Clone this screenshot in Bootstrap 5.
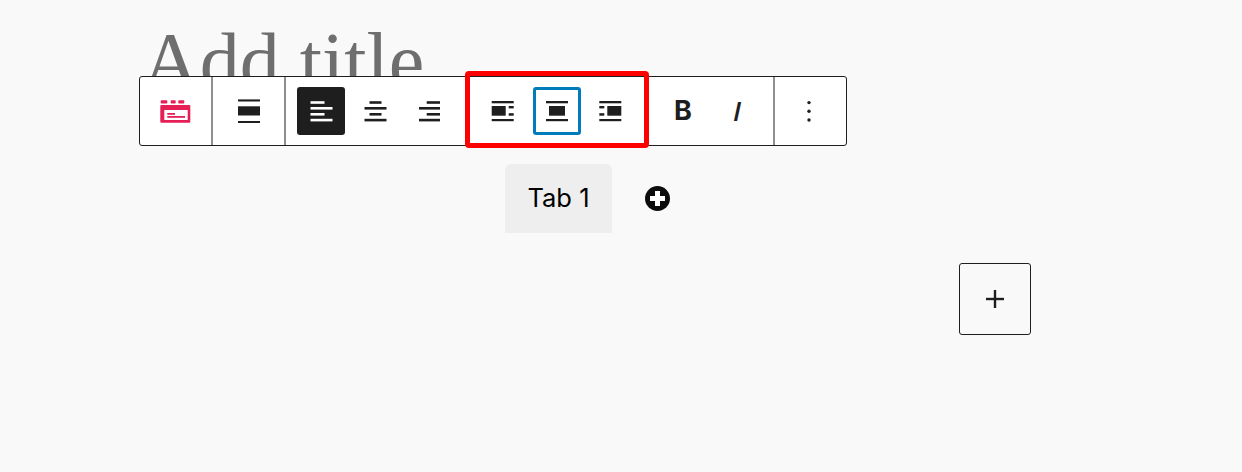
<!DOCTYPE html>
<html lang="en">
<head>
  <meta charset="UTF-8" />
  <title>Add title</title>
  <link href="https://cdn.jsdelivr.net/npm/bootstrap@5.3.0/dist/css/bootstrap.min.css" rel="stylesheet">
  <style>
    body { background: #f9f9f9; height: 472px; overflow: hidden; font-family: Inter, sans-serif; }
    .editor-wrap { height: 164px; padding-left: 142px; }
    .post-title { font-family: "Liberation Serif", serif; font-size: 80px; line-height: 90px; color: #6e6e6e; font-weight: 400; padding-top: 16px; margin: 0; }
    .block-toolbar { left: 139px; top: 76px; width: 708px; height: 70px; background: #fff; border: 1px solid #1e1e1e; border-radius: 3px; }
    .tool-group { padding: 10px 12px; gap: 6px; }
    .tool-group.sep { border-left: 2px solid #8f8f8f; }
    .grp-first { padding-left: 11px; }
    .grp-mid { padding-right: 11px; }
    .grp-align { padding-left: 11px; }
    .grp-wide { padding-left: 14px; padding-right: 12px; }
    .grp-text { padding-right: 12px; }
    .grp-more { padding-left: 10px; }
    .tool-btn { width: 48px; height: 48px; border: 0; padding: 0; background: transparent; color: #1e1e1e; border-radius: 3px; }
    .tool-btn.on { background: #1e1e1e; color: #fff; }
    .tool-btn.picked { box-shadow: inset 0 0 0 3px #007cba; }
    .tool-btn svg { display: block; margin: auto; }
    .tool-txt { font-size: 27px; line-height: 48px; font-weight: 700; }
    .tool-txt.slant { font-family: "Open Sans", sans-serif; font-style: italic; font-weight: 600; font-size: 27px; }
    .red-box { left: 325px; top: -6px; width: 184px; height: 77px; border: 5px solid #f00; border-radius: 4px; }
    .tab-item { margin-left: 505px; width: 107px; height: 69px; background: #eee; border-radius: 6px 6px 0 0; font-size: 25.5px; color: #000; }
    .tab-add { margin-left: 33px; }
    .add-row { margin-top: 30px; padding-right: 211px; }
    .block-add { width: 72px; height: 72px; background: transparent; border: 1px solid #1e1e1e; border-radius: 3px; padding: 0; }
  </style>
</head>
<body>
  <div class="editor-wrap">
    <h1 class="post-title">Add title</h1>
  </div>

  <!-- toolbar over the title -->
  <div class="block-toolbar position-absolute d-flex">
    <div class="tool-group grp-first d-flex">
      <button class="tool-btn">
        <svg width="36" height="36" viewBox="0 0 36 36" fill="#e51f55"><rect x="3.7" y="7.2" width="6.6" height="3.4" rx=".8"/><rect x="13.7" y="7.2" width="5" height="3.4" rx=".8"/><rect x="21.3" y="7.2" width="6" height="3.4" rx=".8"/><path fill-rule="evenodd" d="M4.3 12h28a1 1 0 0 1 1 1v15.7a1 1 0 0 1-1 1h-28a1 1 0 0 1-1-1V13a1 1 0 0 1 1-1zm3 5v10h23.4V17H7.3z"/><rect x="10.3" y="20" width="7.7" height="1.8"/><rect x="10.3" y="23" width="17.7" height="1.8"/></svg>
      </button>
    </div>
    <div class="tool-group grp-mid sep d-flex">
      <button class="tool-btn">
        <svg width="24" height="24" viewBox="0 0 24 24" fill="currentColor"><rect x="1" y=".4" width="22" height="2.1"/><rect x="1" y="7.3" width="22" height="9.2"/><rect x="1" y="22" width="22" height="2.1"/></svg>
      </button>
    </div>
    <div class="tool-group grp-align sep d-flex">
      <button class="tool-btn on">
        <svg width="24" height="24" viewBox="0 0 24 24" fill="currentColor"><rect x="1.5" y="2.2" width="14" height="2.6"/><rect x="1.5" y="8" width="22" height="2.6"/><rect x="1.5" y="14" width="14" height="2.6"/><rect x="1.5" y="19.8" width="22" height="2.6"/></svg>
      </button>
      <button class="tool-btn">
        <svg width="24" height="24" viewBox="0 0 24 24" fill="currentColor"><rect x="6.5" y="2.2" width="12" height="2.6"/><rect x="1.5" y="8" width="22" height="2.6"/><rect x="6.5" y="14" width="12" height="2.6"/><rect x="1.5" y="19.8" width="22" height="2.6"/></svg>
      </button>
      <button class="tool-btn">
        <svg width="24" height="24" viewBox="0 0 24 24" fill="currentColor"><rect x="9.7" y="2.2" width="13.3" height="2.6"/><rect x="2" y="8" width="21" height="2.6"/><rect x="9.7" y="14" width="13.3" height="2.6"/><rect x="2" y="19.8" width="21" height="2.6"/></svg>
      </button>
    </div>
    <div class="tool-group grp-wide d-flex">
      <button class="tool-btn">
        <svg width="24" height="24" viewBox="0 0 24 24" fill="currentColor"><rect x=".7" y="2" width="22" height="2.3"/><rect x=".7" y="7" width="14" height="9.7"/><rect x="17.7" y="7" width="5" height="2.4"/><rect x="17.7" y="14.2" width="5" height="2.5"/><rect x=".7" y="20" width="22" height="2.2"/></svg>
      </button>
      <button class="tool-btn picked">
        <svg width="24" height="24" viewBox="0 0 24 24" fill="currentColor"><rect x="1" y="2" width="22" height="2.3"/><rect x="4" y="7" width="16" height="9.7"/><rect x="1" y="20" width="22" height="2.2"/></svg>
      </button>
      <button class="tool-btn">
        <svg width="24" height="24" viewBox="0 0 24 24" fill="currentColor"><rect x=".3" y="2" width="22" height="2.3"/><rect x="8.3" y="7" width="14" height="9.7"/><rect x=".3" y="7" width="5" height="2.4"/><rect x=".3" y="14.2" width="5" height="2.5"/><rect x=".3" y="20" width="22" height="2.2"/></svg>
      </button>
    </div>
    <div class="tool-group grp-text d-flex">
      <button class="tool-btn tool-txt">B</button>
      <button class="tool-btn tool-txt slant">I</button>
    </div>
    <div class="tool-group grp-more sep d-flex">
      <button class="tool-btn">
        <svg width="24" height="24" viewBox="0 0 24 24" fill="currentColor"><circle cx="12" cy="3.6" r="1.7"/><circle cx="12" cy="12.2" r="1.7"/><circle cx="12" cy="21" r="1.7"/></svg>
      </button>
    </div>
    <div class="red-box position-absolute"></div>
  </div>

  <div class="d-flex align-items-center">
    <div class="tab-item d-flex align-items-center justify-content-center">Tab 1</div>
    <svg class="tab-add" width="25" height="25" viewBox="0 0 25 25"><circle cx="12.5" cy="12.5" r="12.5" fill="#0c0c0c"/><path fill="#fff" d="M10 5h5v5h5v5h-5v5h-5v-5H5v-5h5z"/></svg>
  </div>

  <div class="add-row d-flex justify-content-end">
    <button class="block-add d-flex align-items-center justify-content-center">
      <svg width="20" height="20" viewBox="0 0 20 20" fill="#1e1e1e"><rect x="8.8" y="1" width="2.4" height="18"/><rect x="1" y="8.8" width="18" height="2.4"/></svg>
    </button>
  </div>
</body>
</html>
